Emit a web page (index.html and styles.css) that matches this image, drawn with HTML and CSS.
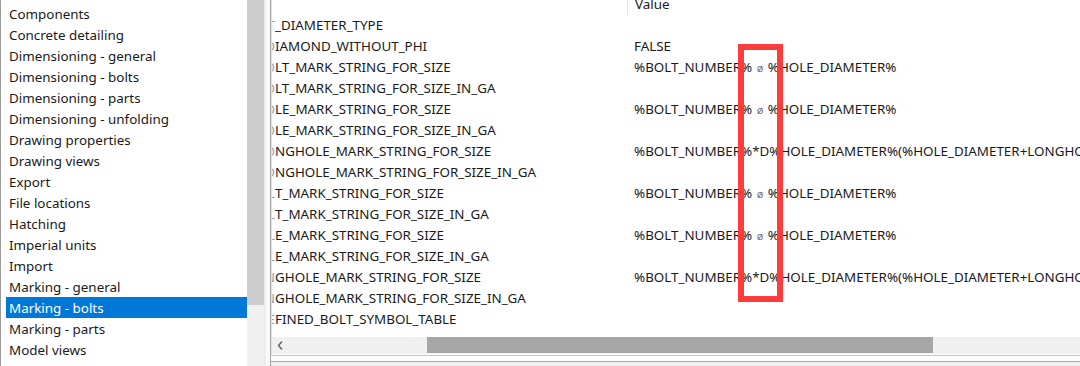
FILE: index.html
```html
<!DOCTYPE html>
<html lang="en">
<head>
  <meta charset="UTF-8">
  <meta name="viewport" content="width=device-width, initial-scale=1">
  <title>Advanced Options</title>
  <link rel="stylesheet" href="styles.css">
</head>
<body>

<div class="window">
  <div class="sidebar">
    <ul class="category-list">
      <li>Components</li>
      <li>Concrete detailing</li>
      <li>Dimensioning - general</li>
      <li>Dimensioning - bolts</li>
      <li>Dimensioning - parts</li>
      <li>Dimensioning - unfolding</li>
      <li>Drawing properties</li>
      <li>Drawing views</li>
      <li>Export</li>
      <li>File locations</li>
      <li>Hatching</li>
      <li>Imperial units</li>
      <li>Import</li>
      <li>Marking - general</li>
      <li class="selected">Marking - bolts</li>
      <li>Marking - parts</li>
      <li>Model views</li>
      <li>Modeling properties</li>
    </ul>
    <div class="vscroll">
      <div class="vthumb"></div>
    </div>
    <div class="splitter"></div>
  </div>

  <div class="main">
    <div class="listview">
      <div class="header">
        <div class="col-name"></div>
        <div class="col-value"><span>Value</span></div>
      </div>
      <div class="rows">
        <div class="row"><div class="col-name"><span class="cut">T</span>_DIAMETER_TYPE</div><div class="col-value"></div></div>
        <div class="row"><div class="col-name"><span class="cut">D</span>IAMOND_WITHOUT_PHI</div><div class="col-value">FALSE</div></div>
        <div class="row"><div class="col-name"><span class="cut">O</span>LT_MARK_STRING_FOR_SIZE</div><div class="col-value">%BOLT_NUMBER% <span class="phi">ø</span> %HOLE_DIAMETER%</div></div>
        <div class="row"><div class="col-name"><span class="cut">O</span>LT_MARK_STRING_FOR_SIZE_IN_GA</div><div class="col-value"></div></div>
        <div class="row"><div class="col-name"><span class="cut">O</span>LE_MARK_STRING_FOR_SIZE</div><div class="col-value">%BOLT_NUMBER% <span class="phi">ø</span> %HOLE_DIAMETER%</div></div>
        <div class="row"><div class="col-name"><span class="cut">O</span>LE_MARK_STRING_FOR_SIZE_IN_GA</div><div class="col-value"></div></div>
        <div class="row"><div class="col-name"><span class="cut">O</span>NGHOLE_MARK_STRING_FOR_SIZE</div><div class="col-value">%BOLT_NUMBER%*D%HOLE_DIAMETER%(%HOLE_DIAMETER+LONGHOLE_X%)</div></div>
        <div class="row"><div class="col-name"><span class="cut">O</span>NGHOLE_MARK_STRING_FOR_SIZE_IN_GA</div><div class="col-value"></div></div>
        <div class="row"><div class="col-name"><span class="cut">L</span>T_MARK_STRING_FOR_SIZE</div><div class="col-value">%BOLT_NUMBER% <span class="phi">ø</span> %HOLE_DIAMETER%</div></div>
        <div class="row"><div class="col-name"><span class="cut">L</span>T_MARK_STRING_FOR_SIZE_IN_GA</div><div class="col-value"></div></div>
        <div class="row"><div class="col-name"><span class="cut">L</span>E_MARK_STRING_FOR_SIZE</div><div class="col-value">%BOLT_NUMBER% <span class="phi">ø</span> %HOLE_DIAMETER%</div></div>
        <div class="row"><div class="col-name"><span class="cut">L</span>E_MARK_STRING_FOR_SIZE_IN_GA</div><div class="col-value"></div></div>
        <div class="row"><div class="col-name"><span class="cut">N</span>GHOLE_MARK_STRING_FOR_SIZE</div><div class="col-value">%BOLT_NUMBER%*D%HOLE_DIAMETER%(%HOLE_DIAMETER+LONGHOLE_X%)</div></div>
        <div class="row"><div class="col-name"><span class="cut">N</span>GHOLE_MARK_STRING_FOR_SIZE_IN_GA</div><div class="col-value"></div></div>
        <div class="row"><div class="col-name"><span class="cut">E</span>FINED_BOLT_SYMBOL_TABLE</div><div class="col-value"></div></div>
      </div>
      <div class="hscroll">
        <div class="arrow">
          <svg width="17" height="17" viewBox="0 0 17 17">
            <path d="M10 4.5 L6.5 8.5 L10 12.5" fill="none" stroke="#606060" stroke-width="1.4"/>
          </svg>
        </div>
        <div class="hspace"></div>
        <div class="hthumb"></div>
      </div>
    </div>
    <div class="below"></div>
  </div>

  <div class="highlight-box"></div>
</div>

</body>
</html>
```

FILE: styles.css
```css
* {
  box-sizing: border-box;
}

body {
  margin: 0;
  font-family: "Noto Sans", "Open Sans", sans-serif;
  font-size: 13.4px;
  color: #1a1a1a;
  background-color: #fff;
}

.window {
  position: relative;
  display: flex;
  width: 1080px;
  height: 366px;
  overflow: hidden;
}

/* left category list */

.sidebar {
  display: flex;
  width: 270px;
  flex-shrink: 0;
}

.category-list {
  list-style: none;
  margin: 0;
  padding: 3px 0 0 5px;
  width: 247px;
  border-left: 1px solid #9a9a9a;
}

.category-list li {
  height: 21px;
  line-height: 23px;
  padding-left: 3px;
  white-space: nowrap;
}

.category-list li.selected {
  background-color: #0078d7;
  color: #fff;
}

.vscroll {
  width: 17px;
  background-color: #f0f0f0;
}

.vthumb {
  height: 305px;
  background-color: #cdcdcd;
}

.splitter {
  width: 6px;
  background: linear-gradient(to right, #ececec 0, #ececec 2px, #f9f9f9 2px);
}

/* right property table */

.main {
  flex: 1;
  display: flex;
  flex-direction: column;
  border-left: 1px solid #a6a6a6;
}

.listview {
  height: 356px;
  border-left: 1px solid #e3e3e3;
  border-bottom: 1px solid #c4c4cc;
  display: flex;
  flex-direction: column;
  overflow: hidden;
}

.header,
.row {
  display: flex;
  white-space: nowrap;
}

.header {
  height: 15px;
  overflow: hidden;
}

.header .col-value {
  border-left: 1px solid #e5e5e5;
}

.header .col-value span {
  display: block;
  margin-top: -6px;
  line-height: 21px;
}

.rows {
  height: 322px;
  overflow: hidden;
}

.row {
  height: 21px;
  line-height: 21px;
}

.col-name {
  width: 355px;
  flex-shrink: 0;
  overflow: hidden;
}

.col-value {
  padding-left: 7px;
}

.cut {
  display: inline-block;
  width: 3px;
  overflow: hidden;
  direction: rtl;
  vertical-align: top;
  color: #9aa0a8;
}

.phi {
  font-size: 11px;
  color: #777;
  margin: 0 1px;
}

.hscroll {
  display: flex;
  height: 17px;
  background-color: #f0f0f0;
}

.arrow {
  width: 17px;
  height: 17px;
}

.hspace {
  width: 138px;
}

.hthumb {
  width: 506px;
  height: 16px;
  background-color: #a6a6a6;
}

.below {
  flex: 1;
  margin-top: 5px;
  border-top: 1px solid #a8a8a8;
  background-color: #f0f0f0;
}

/* annotation drawn over the screenshot */

.highlight-box {
  position: absolute;
  left: 738px;
  top: 44px;
  width: 45px;
  height: 258px;
  border: 6px solid #ff3c3c;
}
```
